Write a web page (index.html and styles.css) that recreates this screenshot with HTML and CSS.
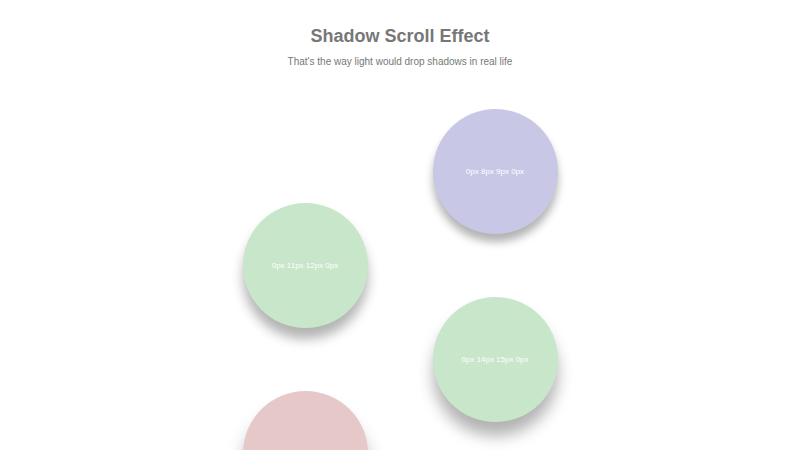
FILE: index.html
```html
<!doctype html>
<html lang="en">
<head>
	<meta charset="UTF-8">
	<title>Shadow Scroll Effect</title>
	<link rel="stylesheet" href="styles.css">
</head>
<body>
	<header class="intro">
		<h1>Shadow Scroll Effect</h1>
		<p>That's the way light would drop shadows in real life</p>
	</header>
	<ul class="balls">
		<li class="ball purple shadow-8">0px 8px 9px 0px</li>
		<li class="ball green shadow-11">0px 11px 12px 0px</li>
		<li class="ball green shadow-14">0px 14px 15px 0px</li>
		<li class="ball pink shadow-17">0px 17px 18px 0px</li>
	</ul>
</body>
</html>
```
FILE: styles.css
```css
* {
	margin: 0;
	padding: 0;
	box-sizing: border-box;
}
body {
	background-color: #fff;
	font-family: "Liberation Sans", Arial, sans-serif;
	color: #777;
	overflow: hidden;
}
.intro {
	text-align: center;
	padding-top: 25px;
}
.intro h1 {
	font-size: 18px;
	font-weight: bold;
	line-height: 22px;
}
.intro p {
	font-size: 10px;
	line-height: 14px;
	margin-top: 8px;
}
.balls {
	list-style: none;
	width: 315px;
	margin: 40px auto 0;
	display: flex;
	flex-direction: column;
}
.ball {
	width: 125px;
	height: 125px;
	border-radius: 50%;
	display: flex;
	align-items: center;
	justify-content: center;
	color: #fff;
	font-size: 8px;
	margin-bottom: -31px;
}
.ball:nth-child(odd) {
	align-self: flex-end;
}
.ball:nth-child(even) {
	align-self: flex-start;
}
.purple {
	background-color: #c8c8e6;
}
.green {
	background-color: #c8e6c9;
}
.pink {
	background-color: #e6c8c8;
}
.shadow-8 {
	box-shadow: 0px 8px 9px 0px rgba(0, 0, 0, 0.3);
}
.shadow-11 {
	box-shadow: 0px 11px 12px 0px rgba(0, 0, 0, 0.3);
}
.shadow-14 {
	box-shadow: 0px 14px 15px 0px rgba(0, 0, 0, 0.3);
}
.shadow-17 {
	box-shadow: 0px 17px 18px 0px rgba(0, 0, 0, 0.3);
}
```
